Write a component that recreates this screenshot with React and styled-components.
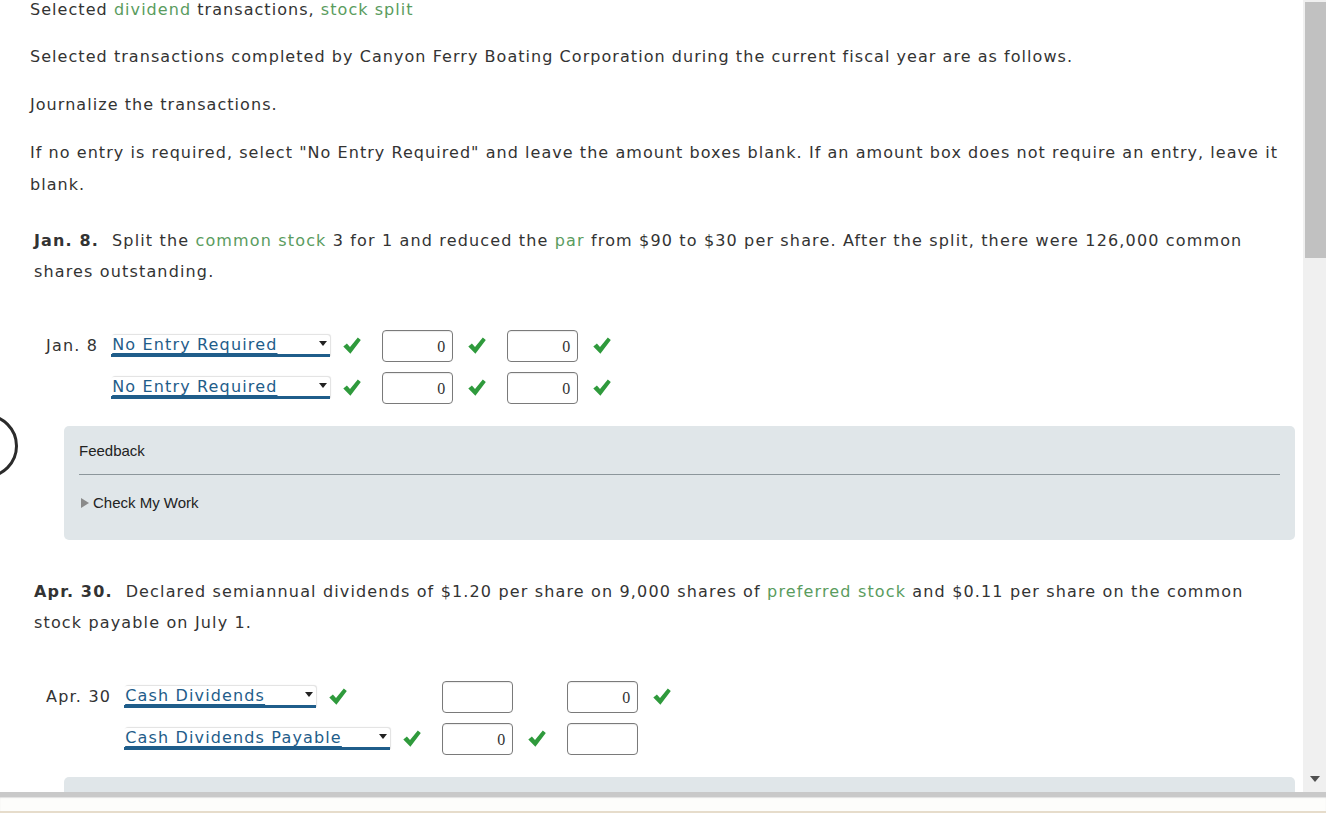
import React from "react"
import styled, { createGlobalStyle } from "styled-components"

const GlobalStyle = createGlobalStyle`
  html, body {
    margin: 0;
    padding: 0;
    overflow: hidden;
    background: #ffffff;
  }
  body {
    font-family: "DejaVu Sans", Verdana, sans-serif;
    color: #333333;
  }
`

function Check() {
  return (
    <CheckMark viewBox="0 0 18 18" aria-hidden="true">
      <path d="M0.3 9.4 L3.9 6.4 L7 9.9 L14.8 0.4 L17.8 2.9 L7.4 16.8 Z" fill="#2f9a3c" />
    </CheckMark>
  )
}

function Amount({ value }) {
  return (
    <AmountCell>
      <AmountBox>{value || ""}</AmountBox>
      {value ? <Check /> : <CheckSlot />}
    </AmountCell>
  )
}

function JournalRow({ label, row }) {
  return (
    <>
      <DateCell>{label}</DateCell>
      <AccountCell>
        <Dropdown width={row.width}>
          <span>{row.account}</span>
          <Caret />
        </Dropdown>
        <Check />
      </AccountCell>
      <Amount value={row.debit} />
      <Amount value={row.credit} />
    </>
  )
}

function Feedback({ cut }) {
  return (
    <FeedbackBox cut={cut}>
      {!cut && (
        <>
          <FeedbackLabel>Feedback</FeedbackLabel>
          <FeedbackRule />
          <CheckWork>
            <Arrow />
            Check My Work
          </CheckWork>
        </>
      )}
    </FeedbackBox>
  )
}

export default function App() {
  const entries = [
    {
      date: "Jan. 8.",
      text: (
        <>
          Split the <Term>common stock</Term> 3 for 1 and reduced the <Term>par</Term> from $90 to $30
          per share. After the split, there were 126,000 common shares outstanding.
        </>
      ),
      label: "Jan. 8",
      rows: [
        { account: "No Entry Required", width: 219, debit: "0", credit: "0" },
        { account: "No Entry Required", width: 219, debit: "0", credit: "0" },
      ],
      feedback: true,
    },
    {
      date: "Apr. 30.",
      text: (
        <>
          Declared semiannual dividends of $1.20 per share on 9,000 shares of{" "}
          <Term>preferred stock</Term> and $0.11 per share on the common stock payable on July 1.
        </>
      ),
      label: "Apr. 30",
      rows: [
        { account: "Cash Dividends", width: 192, debit: null, credit: "0" },
        { account: "Cash Dividends Payable", width: 266, debit: "0", credit: null },
      ],
      feedback: false,
    },
  ]

  return (
    <>
      <GlobalStyle />
      <Screen>
        <Viewport>
          <Content>
            <NavCircle />
            <Title>
              Selected <Term>dividend</Term> transactions, <Term>stock split</Term>
            </Title>
            <Para>
              Selected transactions completed by Canyon Ferry Boating Corporation during the current
              fiscal year are as follows.
            </Para>
            <Para>Journalize the transactions.</Para>
            <Para>
              If no entry is required, select "No Entry Required" and leave the amount boxes blank. If
              an amount box does not require an entry, leave it blank.
            </Para>
            {entries.map((entry) => (
              <Entry key={entry.label}>
                <Description>
                  <DateTag>{entry.date}</DateTag>
                  {entry.text}
                </Description>
                <Journal>
                  {entry.rows.map((row, i) => (
                    <JournalRow key={i} label={i === 0 ? entry.label : ""} row={row} />
                  ))}
                </Journal>
                <Feedback cut={!entry.feedback} />
              </Entry>
            ))}
          </Content>
          <Scrollbar>
            <Thumb />
            <DownArrow />
          </Scrollbar>
        </Viewport>
        <Footer />
      </Screen>
    </>
  )
}

const Screen = styled.div`
  width: 1326px;
  height: 813px;
  display: flex;
  flex-direction: column;
  overflow: hidden;
`
const Viewport = styled.div`
  height: 792px;
  display: flex;
  flex-shrink: 0;
`
const Content = styled.main`
  position: relative;
  flex: 1;
  overflow: hidden;
  padding: 0 8px 0 30px;
  font-size: 16px;
  letter-spacing: 1.05px;
`
const NavCircle = styled.div`
  position: absolute;
  left: -46px;
  top: 414px;
  width: 58px;
  height: 58px;
  border: 3px solid #2b2b2b;
  border-radius: 50%;
`
const Term = styled.span`
  color: #5a9c5e;
`
const Title = styled.h1`
  margin: 0 0 21px;
  font-size: 16px;
  font-weight: normal;
  line-height: 20px;
`
const Para = styled.p`
  margin: 0 0 16px;
  line-height: 32px;
`
const Entry = styled.section`
  margin-top: 24px;
`
const Description = styled.p`
  margin: 0;
  padding-left: 4px;
  line-height: 31px;
  letter-spacing: 1.15px;
`
const DateTag = styled.b`
  margin-right: 13px;
`
const Journal = styled.div`
  display: grid;
  grid-template-columns: auto auto auto auto;
  justify-content: start;
  align-items: center;
  column-gap: 21px;
  row-gap: 10px;
  margin: 43px 0 0 16px;
`
const DateCell = styled.div`
  margin-right: -8px;
  line-height: 32px;
  letter-spacing: 1.2px;
`
const AccountCell = styled.div`
  display: flex;
  align-items: center;
  gap: 13px;
`
const Dropdown = styled.div`
  width: ${(props) => props.width}px;
  height: 22px;
  box-sizing: border-box;
  display: flex;
  align-items: center;
  justify-content: space-between;
  padding: 0 3px 0 1px;
  background: #ffffff;
  border-radius: 3px 3px 0 0;
  box-shadow: 1px -1px 1px rgba(0, 0, 0, 0.12);
  border-bottom: 3px solid #1f5d8a;
  color: #1f5d8a;
  line-height: 19px;
  letter-spacing: 1.15px;
  > span {
    text-decoration: underline;
    text-decoration-thickness: 1px;
    text-underline-offset: 3px;
  }
`
const Caret = styled.i`
  width: 0;
  height: 0;
  margin-bottom: 2px;
  border-left: 4px solid transparent;
  border-right: 4px solid transparent;
  border-top: 5px solid #222222;
`
const CheckMark = styled.svg`
  width: 18px;
  height: 18px;
  flex-shrink: 0;
`
const CheckSlot = styled.span`
  width: 18px;
  height: 18px;
`
const AmountCell = styled.div`
  display: flex;
  align-items: center;
  gap: 15px;
`
const AmountBox = styled.div`
  width: 71px;
  height: 32px;
  box-sizing: border-box;
  border: 1px solid #7a7a7a;
  border-radius: 4px;
  box-shadow: inset 0 1px 1px rgba(0, 0, 0, 0.08);
  padding: 0 7px;
  text-align: right;
  font-family: "Liberation Serif", "Times New Roman", serif;
  font-size: 16px;
  letter-spacing: 0;
  line-height: 31px;
  color: #333333;
`
const FeedbackBox = styled.div`
  height: ${(props) => (props.cut ? "40px" : "114px")};
  box-sizing: border-box;
  margin: 22px 0 36px 34px;
  padding: 17px 15px 0;
  background: #e0e6e9;
  border-radius: 5px;
  font-family: "Liberation Sans", Arial, sans-serif;
  font-size: 15px;
  letter-spacing: 0;
  color: #222222;
`
const FeedbackLabel = styled.div`
  line-height: 16px;
`
const FeedbackRule = styled.hr`
  margin: 15px 0 20px;
  border: 0;
  border-top: 1px solid #8c969b;
`
const CheckWork = styled.div`
  display: flex;
  align-items: center;
  line-height: 16px;
`
const Arrow = styled.i`
  width: 0;
  height: 0;
  margin: 0 4px 1px 2px;
  border-top: 5px solid transparent;
  border-bottom: 5px solid transparent;
  border-left: 8px solid #8a8a8a;
`
const Scrollbar = styled.div`
  width: 23px;
  flex-shrink: 0;
  display: flex;
  flex-direction: column;
  align-items: flex-end;
  justify-content: space-between;
  background: #f0f0f0;
  padding: 2px 0 10px;
  box-sizing: border-box;
`
const Thumb = styled.div`
  width: 21px;
  height: 256px;
  background: #c1c1c1;
`
const DownArrow = styled.i`
  align-self: center;
  width: 0;
  height: 0;
  border-left: 5px solid transparent;
  border-right: 5px solid transparent;
  border-top: 6px solid #505050;
`
const Footer = styled.footer`
  flex: 1;
  background: #fdfdfb;
  border-top: 5px solid #c9c9c9;
  border-bottom: 2px solid #e6dccb;
  box-shadow: inset 0 1px 1px #e0e0e0;
`
